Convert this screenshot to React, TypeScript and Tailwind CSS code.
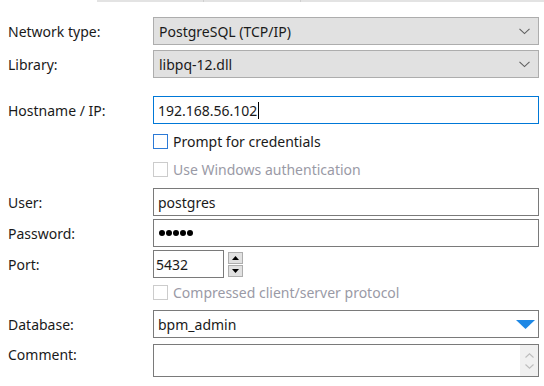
import { ReactNode } from 'react';

const font = { fontFamily: '"Noto Sans", "Open Sans", sans-serif' };

function Chevron({ className = '' }: { className?: string }) {
  return (
    <svg width="11" height="7" viewBox="0 0 11 7" className={className}>
      <path d="M0.5 0.8 L5.5 5.6 L10.5 0.8" fill="none" stroke="#5f5f5f" strokeWidth="1.1" />
    </svg>
  );
}

function Row({ label, children, className = '' }: { label?: string; children: ReactNode; className?: string }) {
  return (
    <div className={`flex items-center ${className}`}>
      <div className="w-[153px] shrink-0 pl-2 text-[14px] text-[#1a1a1a]">{label}</div>
      {children}
    </div>
  );
}

function Select({ value }: { value: string }) {
  return (
    <div className="flex h-[28px] w-[386px] items-center justify-between border border-[#adadad] bg-[#e1e1e1] pl-[5px] pr-[8px] text-[14px] text-[#1a1a1a]">
      <span>{value}</span>
      <Chevron />
    </div>
  );
}

function Check({ label, disabled, focused }: { label: string; disabled?: boolean; focused?: boolean }) {
  return (
    <div className="flex items-center gap-[5px] text-[14px]">
      <div
        className={`h-[15px] w-[15px] border bg-white ${
          focused ? 'border-[#2c7ad6]' : 'border-[#cccccc]'
        } ${disabled ? '' : ''}`}
      />
      <span className={disabled ? 'text-[#9a9aa6]' : 'text-[#1a1a1a]'}>{label}</span>
    </div>
  );
}

export default function App() {
  return (
    <div className="h-[386px] w-[544px] overflow-hidden bg-white" style={font}>
      {/* tab strip remnant */}
      <div className="ml-[97px] flex h-[2px] bg-[#e3e3e3]">
        <div className="w-[107px] border-r border-[#cfcfcf]" />
        <div className="w-[97px] border-r border-[#cfcfcf]" />
      </div>

      <div className="flex flex-col pt-[15px]">
        <Row label="Network type:">
          <Select value="PostgreSQL (TCP/IP)" />
        </Row>
        <Row label="Library:" className="mt-[5px]">
          <Select value="libpq-12.dll" />
        </Row>

        <Row label="Hostname / IP:" className="mt-[18px]">
          <div className="flex h-[28px] w-[386px] items-center border border-[#0078d7] bg-white pl-[4px] text-[14px] text-[#1a1a1a]">
            192.168.56.102<span className="ml-[1px] inline-block h-[17px] w-px bg-black" />
          </div>
        </Row>

        <Row className="mt-[10px] h-[15px]">
          <Check label="Prompt for credentials" focused />
        </Row>
        <Row className="mt-[13px] h-[15px]">
          <Check label="Use Windows authentication" disabled />
        </Row>

        <Row label="User:" className="mt-[11px]">
          <div className="flex h-[28px] w-[386px] items-center border border-[#7a7a7a] bg-white pl-[4px] text-[14px] text-[#1a1a1a]">
            postgres
          </div>
        </Row>
        <Row label="Password:" className="mt-[3px]">
          <div className="flex h-[28px] w-[386px] items-center gap-[1px] border border-[#7a7a7a] bg-white pl-[5px]">
            {[0, 1, 2, 3, 4].map((i) => (
              <span key={i} className="h-[6px] w-[6px] rounded-full bg-black" />
            ))}
          </div>
        </Row>
        <Row label="Port:" className="mt-[3px]">
          <div className="flex h-[28px] w-[71px] items-center border border-[#7a7a7a] bg-white pl-[2px] text-[14px] text-[#1a1a1a]">
            5432
          </div>
          <div className="ml-[4px] flex flex-col gap-[1px]">
            <div className="flex h-[12px] w-[15px] items-center justify-center border border-[#adadad] bg-[#e1e1e1]">
              <svg width="7" height="4" viewBox="0 0 7 4">
                <path d="M0 4 L3.5 0 L7 4 Z" fill="#000" />
              </svg>
            </div>
            <div className="flex h-[12px] w-[15px] items-center justify-center border border-[#adadad] bg-[#e1e1e1]">
              <svg width="7" height="4" viewBox="0 0 7 4">
                <path d="M0 0 L3.5 4 L7 0 Z" fill="#000" />
              </svg>
            </div>
          </div>
        </Row>
        <Row className="mt-[7px] h-[15px]">
          <Check label="Compressed client/server protocol" disabled />
        </Row>

        <Row label="Database:" className="mt-[10px]">
          <div className="flex h-[28px] w-[386px] items-center justify-between border border-[#7a7a7a] bg-white pl-[4px] pr-[3px] text-[14px] text-[#1a1a1a]">
            <span>bpm_admin</span>
            <svg width="19" height="9" viewBox="0 0 19 9">
              <path d="M0 0 L19 0 L9.5 9 Z" fill="#1e88e5" />
            </svg>
          </div>
        </Row>
        <Row label="Comment:" className="mt-[6px] items-start">
          <div className="flex h-[33px] w-[386px] justify-end border border-[#7a7a7a] bg-white">
            <div className="flex w-[18px] flex-col items-center justify-center gap-[6px] bg-[#f0f0f0]">
              <svg width="9" height="5" viewBox="0 0 9 5">
                <path d="M0.5 4.5 L4.5 0.8 L8.5 4.5" fill="none" stroke="#bdbdbd" strokeWidth="1.1" />
              </svg>
              <svg width="9" height="5" viewBox="0 0 9 5">
                <path d="M0.5 0.5 L4.5 4.2 L8.5 0.5" fill="none" stroke="#bdbdbd" strokeWidth="1.1" />
              </svg>
            </div>
          </div>
        </Row>
      </div>
    </div>
  );
}
